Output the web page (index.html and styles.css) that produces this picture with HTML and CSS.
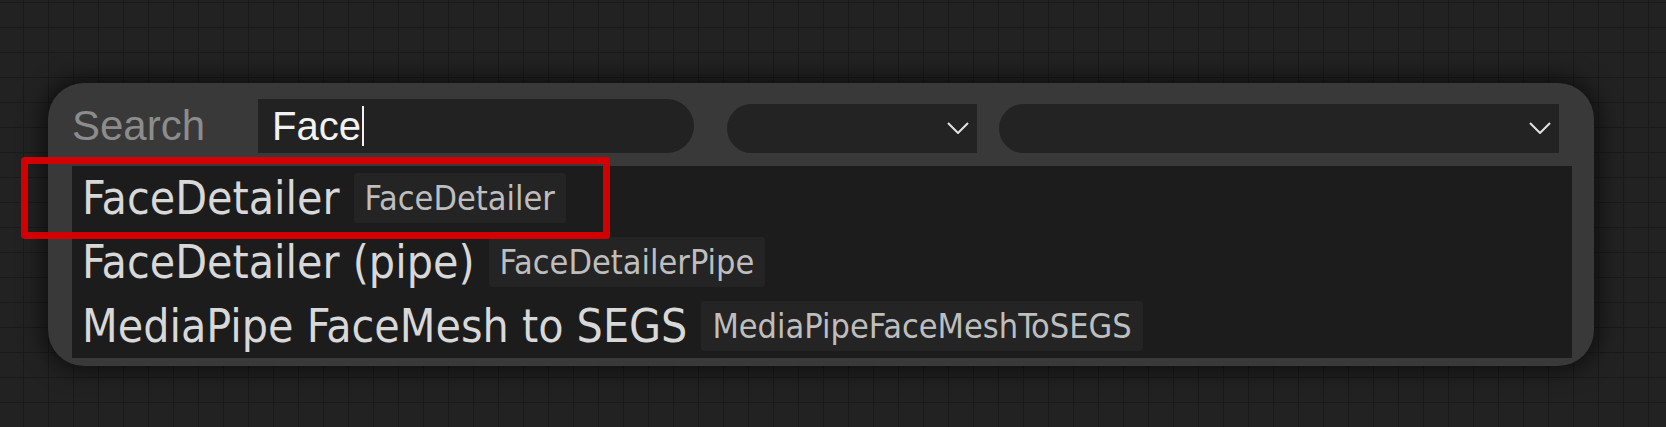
FILE: index.html
```html
<!DOCTYPE html>
<html>
<head>
<meta charset="utf-8">
<link rel="stylesheet" href="styles.css">
</head>
<body>
<div class="canvas">
  <div class="searchbox">
    <div class="header">
      <span class="label">Search</span>
      <div class="input"><span class="value">Face</span><span class="caret"></span></div>
      <div class="select s1"><svg class="chev" viewBox="0 0 22 12" width="22" height="12"><path d="M1 1 L11 11 L21 1" fill="none" stroke="#e2e2e2" stroke-width="2"/></svg></div>
      <div class="select s2"><svg class="chev" viewBox="0 0 22 12" width="22" height="12"><path d="M1 1 L11 11 L21 1" fill="none" stroke="#e2e2e2" stroke-width="2"/></svg></div>
    </div>
    <div class="list">
      <div class="row"><span class="name">FaceDetailer</span><span class="badge">FaceDetailer</span></div>
      <div class="row"><span class="name">FaceDetailer (pipe)</span><span class="badge">FaceDetailerPipe</span></div>
      <div class="row"><span class="name">MediaPipe FaceMesh to SEGS</span><span class="badge">MediaPipeFaceMeshToSEGS</span></div>
    </div>
  </div>
  <div class="highlight"></div>
</div>
</body>
</html>
```

FILE: styles.css
```css
html, body {
  margin: 0;
  padding: 0;
}
body {
  width: 1666px;
  height: 427px;
  overflow: hidden;
  background-color: #222222;
}
.canvas {
  position: relative;
  width: 1666px;
  height: 427px;
  padding-top: 83px;
  box-sizing: border-box;
  background-color: #222222;
  background-image:
    linear-gradient(#1a1a1a 1px, transparent 1px),
    linear-gradient(90deg, #1a1a1a 1px, transparent 1px);
  background-size: 25px 25px;
  background-position: -2px 2px;
}
.searchbox {
  margin-left: 48px;
  width: 1546px;
  box-sizing: border-box;
  padding: 16px 22px 8px 24px;
  background: #393939;
  border-radius: 36px;
  box-shadow: 0 0 22px 6px rgba(0, 0, 0, 0.55);
}
.header {
  display: flex;
  align-items: center;
  height: 54px;
  padding-right: 13px;
}
.label {
  font-family: "Liberation Sans", Arial, sans-serif;
  font-size: 42px;
  color: #8c8c8c;
  width: 186px;
  flex: none;
}
.input {
  width: 436px;
  height: 54px;
  box-sizing: border-box;
  padding-left: 14px;
  background: #222222;
  border-radius: 0 27px 27px 0;
  display: flex;
  align-items: center;
  flex: none;
}
.value {
  font-family: "Liberation Sans", Arial, sans-serif;
  font-size: 40px;
  color: #f2f2f2;
}
.caret {
  width: 2px;
  height: 40px;
  background: #f2f2f2;
  margin-left: 1px;
}
.select {
  height: 49px;
  margin-top: 4px;
  box-sizing: border-box;
  background: #232323;
  border-radius: 25px 0 0 25px;
  display: flex;
  align-items: center;
  justify-content: flex-end;
  padding-right: 8px;
  flex: none;
}
.s1 {
  width: 250px;
  margin-left: 33px;
}
.s2 {
  width: 560px;
  margin-left: 22px;
}
.chev {
  display: block;
}
.list {
  margin-top: 13px;
  background: #1c1c1c;
  width: 1500px;
}
.row {
  height: 64px;
  display: flex;
  align-items: center;
  padding-left: 10px;
}
.name {
  font-family: "DejaVu Sans Condensed", "DejaVu Sans", sans-serif;
  font-stretch: condensed;
  font-size: 46px;
  color: #d8d8d8;
}
.badge {
  margin-left: 14px;
  height: 50px;
  padding: 0 11px;
  background: #242424;
  border-radius: 3px;
  display: flex;
  align-items: center;
  font-family: "DejaVu Sans Condensed", "DejaVu Sans", sans-serif;
  font-stretch: condensed;
  font-size: 34px;
  color: #bebebe;
}
.highlight {
  position: absolute;
  left: 21px;
  top: 157px;
  width: 589px;
  height: 82px;
  box-sizing: border-box;
  border: 7px solid #d30000;
  border-radius: 4px;
}
```
